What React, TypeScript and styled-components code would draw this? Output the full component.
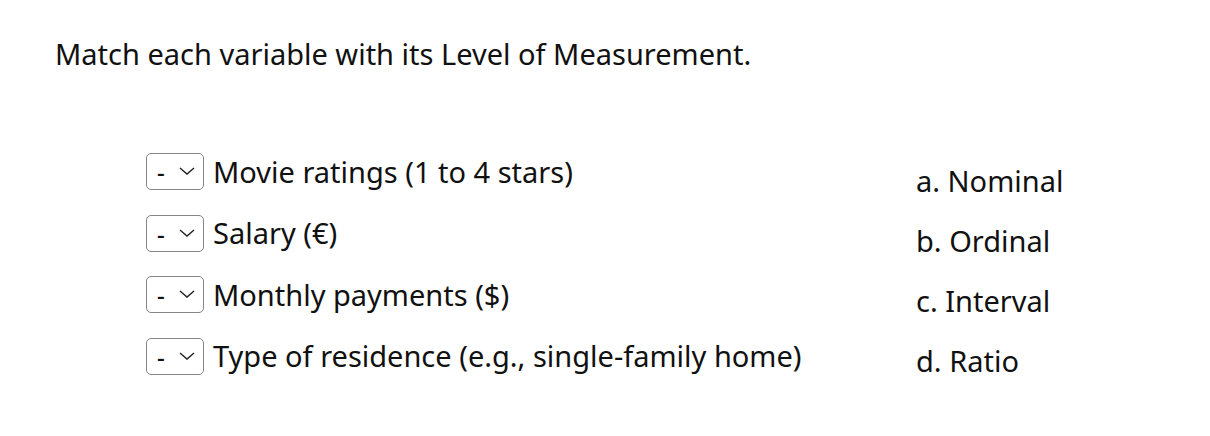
import styled, { createGlobalStyle } from "styled-components";

const GlobalStyle = createGlobalStyle`
  body {
    margin: 0;
    background: #fff;
    font-family: "Noto Sans", "Open Sans", "Liberation Sans", sans-serif;
    color: #111;
  }
`;

const variables = [
  "Movie ratings (1 to 4 stars)",
  "Salary (€)",
  "Monthly payments ($)",
  "Type of residence (e.g., single-family home)",
];

const levels = ["a. Nominal", "b. Ordinal", "c. Interval", "d. Ratio"];

const Chevron = () => (
  <ChevronIcon viewBox="0 0 16 8" width="16" height="8">
    <path d="M1 1 L8 7 L15 1" fill="none" stroke="#222" strokeWidth="1.4" />
  </ChevronIcon>
);

export default function App() {
  return (
    <Page>
      <GlobalStyle />
      <Question>Match each variable with its Level of Measurement.</Question>
      <Board>
        <Variables>
          {variables.map((name) => (
            <Row key={name}>
              <SelectWrap>
                <Select defaultValue="-">
                  <option>-</option>
                  <option>a</option>
                  <option>b</option>
                  <option>c</option>
                  <option>d</option>
                </Select>
                <Chevron />
              </SelectWrap>
              <Label>{name}</Label>
            </Row>
          ))}
        </Variables>
        <Levels>
          {levels.map((level) => (
            <Level key={level}>{level}</Level>
          ))}
        </Levels>
      </Board>
    </Page>
  );
}

const Page = styled.div`
  padding: 36px 55px;
`;
const Question = styled.div`
  font-size: 29px;
  line-height: 36px;
  font-weight: 440;
`;
const Board = styled.div`
  display: flex;
  margin-top: 81px;
  padding-left: 91px;
`;
const Variables = styled.div`
  display: flex;
  flex-direction: column;
  gap: 24.5px;
  width: 770px;
`;
const Row = styled.div`
  display: flex;
  align-items: center;
  gap: 9px;
  height: 37px;
`;
const SelectWrap = styled.div`
  position: relative;
  width: 58px;
  height: 37px;
`;
const Select = styled.select`
  appearance: none;
  width: 100%;
  height: 100%;
  box-sizing: border-box;
  border: 1.5px solid #858585;
  border-radius: 5px;
  background: #fff;
  padding: 0 0 0 10px;
  font-family: "Noto Sans", "Open Sans", "Liberation Sans", sans-serif;
  font-size: 24px;
  font-weight: 500;
  color: #111;
`;
const ChevronIcon = styled.svg`
  position: absolute;
  right: 9px;
  top: 14px;
  pointer-events: none;
`;
const Label = styled.span`
  font-size: 29px;
  line-height: 36px;
  font-weight: 440;
`;
const Levels = styled.div`
  display: flex;
  flex-direction: column;
  gap: 24px;
  padding-top: 10px;
`;
const Level = styled.div`
  font-size: 29px;
  line-height: 36px;
  font-weight: 440;
`;
